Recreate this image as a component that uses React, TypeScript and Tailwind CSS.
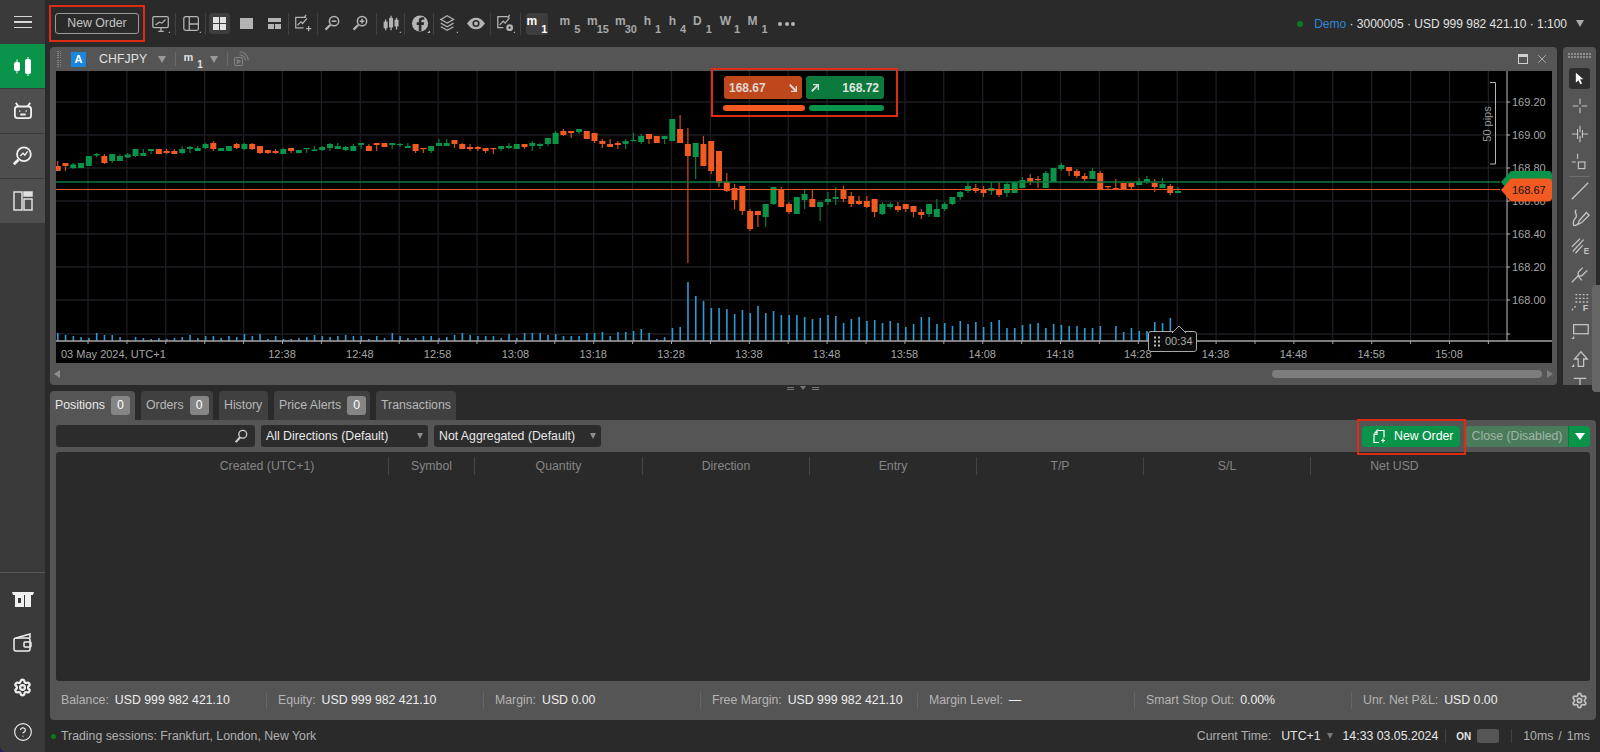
import React from 'react';
import { CircleHelp, Settings, X } from 'lucide-react';

// [green?, high, bodyTop, bodyBottom, low] in page pixels
const candles: number[][] = [
  [0,161,166,171,171],[0,163,163,166,171],[1,163,164.5,168,169],[1,163,163,168,168],[1,156,156,166,166],[1,153,154,155.5,157],
  [0,154,156,163,164],[1,154,154,161,163],[1,154,156,161,161],[1,153,154.5,157.5,158],[1,149,149,156,157],[1,149,153,156,156],
  [1,149,149,151,154],[0,149,149,154,154],[0,149,151,153,154],[0,149,151,154,154],[1,146,149,153,154],[1,146,147,149,153],
  [1,146,148,151,151],[1,143,144,148,149],[0,141,143,149,151],[1,148,148,151,151],[1,146,146,151,151],[0,143,144,148,149],
  [1,143,144,149,150],[0,143,144,149,150],[0,146,146,153,154],[0,150,150,153,154],[0,149,151,153,154],[1,148,149,154,154],
  [0,148,148,151,153],[1,150,150,153,153],[1,148,148,149,153],[1,146,149.5,151,151],[1,146,147,150,151],[1,143,144,148,151],
  [1,143,146,149,149],[1,146,147,150,151],[1,144,146,151,151],[1,143,143,145,149],[0,144,146,151,151],[0,143,143,145,151],
  [0,143,143,147,147],[1,143,143,145,149],[1,143,144,145,147],[1,143,146,148,148],
  [0,144,144,151,153],[0,148,148,149,153],[1,146,146,151,153],[1,139,143,146,146],[1,139,143,146,146],[0,140,140,144,148],
  [0,143,144,149,149],[0,144,147,149,151],[0,146,147,149,151],[0,148,148,151,153],[0,148,148,149,154],[1,146,146,149,151],
  [1,143,146,148,149],[1,144,144,149,149],[0,144,144,147,149],[1,141,143,146,151],[1,143,144,146,149],[1,138,138,144,146],
  [1,131,133,144,144],[0,129,131,135,136],[0,131,131,133,138],[1,129,129,132,134],[0,131,131,139,139],[0,133,133,141,143],
  [0,139,141,144,148],[0,139,144,147,147],[0,141,143,145,149],[1,139,141,144,149],[1,133,140,141,141],[1,134,136,142,144],
  [0,134,134,139,144],
  [0,136,136,143,143],[1,136,136,139,144],[1,119,119,141,141],[0,115,129,143,143],[0,128,144,156,263],[1,143,143,157,179],
  [0,136,144,166,166],[0,141,141,171,174],[0,151,151,183,187],[0,173,182,191,192],[0,184,188,200,209],[0,186,186,211,215],
  [0,209,211,229,231],[0,211,211,215,227],[1,204,204,217,227],[1,187,187,204,205],[0,187,189,207,207],[0,202,204,212,214],
  [1,197,197,214,214],[1,189,194,200,209],[0,189,199,207,207],[1,202,202,207,221],[1,192,199,202,205],[1,187,197,199,205],
  [0,186,189,199,202],[0,192,196,204,207],[0,196,201,204,205],[0,196,201,207,208],[0,199,199,212,217],[1,202,204,214,215],
  [1,202,204,207,209],[0,202,206,210,212],[0,204,204,209,212],[0,206,206,212,217],[0,209,212,215,219],[1,204,204,214,217],
  [1,199,209,217,217],[1,202,204,209,211],[1,197,197,204,205],[1,191,192,197,200],[1,182,186,191,193],[0,184,188,191,193],
  [0,186,189,193,197],[1,182,188,191,195],[0,182,189,195,197],[1,182,184,193,197],[1,182,182,193,193],[1,177,180,188,188],
  [0,174,178,182,185],[0,176,179,180,188],[1,171,173,188,188],[1,168,168,182,182],[1,163,165,169,171],[0,167,167,171,176],
  [0,169,171,176,178],[0,173,176,179,181],[1,168,171,179,179],[0,171,173,189,189],[0,186,186,187,189],[0,179,188,189,189],
  [0,183,183,189,189],[0,183,183,187,189],[1,178,181,185,185],[1,176,179,182,184],[0,179,183,187,192],[1,178,184,188,188],
  [0,184,186,193,195],[1,187,191,193,193],
];

const volumes = [
  8,6,5,4,3,8,6,6,4,1,4,3,2,3,2,3,4,6,3,5,5,3,5,4,7,5,7,2,5,2,2,3,4,6,5,4,5,6,5,5,2,5,3,8,5,3,3,5,5,3,4,6,8,6,5,5,5,3,7,3,8,8,8,6,7,5,5,5,8,8,9,5,9,9,10,
  12,8,2,4,13,14,59,45,40,33,33,32,27,31,28,35,28,30,26,26,26,24,22,23,26,25,18,22,24,20,21,18,20,18,14,17,24,24,17,18,15,20,17,19,
  14,19,21,13,13,16,17,18,13,17,16,15,15,13,13,15,0,15,9,13,10,10,19,18,23,0,
];

const prices = [['169.20', 102], ['169.00', 135], ['168.80', 168], ['168.60', 201], ['168.40', 234], ['168.20', 267], ['168.00', 300]] as const;
const times = ['12:38', '12:48', '12:58', '13:08', '13:18', '13:28', '13:38', '13:48', '13:58', '14:08', '14:18', '14:28', '14:38', '14:48', '14:58', '15:08'];
const gridX = Array.from({ length: 37 }, (_, i) => 88 + i * 38.9);
const GREEN = '#09944a';
const ORANGE = '#f25a22';

const Corner = () => <path d="M21 19v2h-2z" fill="currentColor" stroke="none" />;

const Ico = ({ children, className }: { children: React.ReactNode; className: string }) => (
  <svg viewBox="0 0 22 22" fill="none" stroke="currentColor" strokeWidth="1.4" className={className}>
    {children}
  </svg>
);

const Divider = ({ className }: { className: string }) => <div className={`w-px h-[22px] bg-[#424242] ${className}`} />;

const timeframes = [
  { a: 'm', b: '1', w: 'w-[22px] ml-[5px] bg-[#3d3d3d] text-white', sub: 'ml-[4px]' },
  { a: 'm', b: '5', w: 'w-[28px] ml-[8px] text-[#a8a8a8]', sub: 'ml-[4px]' },
  { a: 'm', b: '15', w: 'w-[28px] text-[#a8a8a8]', sub: 'ml-[-1px]' },
  { a: 'm', b: '30', w: 'w-[28px] text-[#a8a8a8]', sub: 'ml-[-1px]' },
  { a: 'h', b: '1', w: 'w-[25px] text-[#a8a8a8]', sub: 'ml-[4px]' },
  { a: 'h', b: '4', w: 'w-[25px] text-[#a8a8a8]', sub: 'ml-[4px]' },
  { a: 'D', b: '1', w: 'w-[25px] text-[#a8a8a8]', sub: 'ml-[4px]' },
  { a: 'W', b: '1', w: 'w-[30px] text-[#a8a8a8]', sub: 'ml-[3px]' },
  { a: 'M', b: '1', w: 'w-[25px] text-[#a8a8a8]', sub: 'ml-[4px]' },
];

const TopBar = () => (
  <div className="h-[47px] flex items-center pl-[4px] text-[#b4b4b4] bg-[#2a2a2a] shrink-0">
    <div className="w-[96px] h-[37px] border-2 border-[#de2c14] flex items-center justify-center shrink-0">
      <button className="w-[84px] h-[21px] rounded-[3px] border-[1.5px] border-[#9a9a9a] text-[#c4c4c4] flex items-center justify-center">New Order</button>
    </div>
    <Ico className="w-[20px] h-[20px] ml-[6px] shrink-0">
      <rect x="2" y="3" width="17" height="12" rx="1.5" /><path d="M5 12l4-3 3 1 4-4M8 19h6M11 15v4" /><Corner />
    </Ico>
    <Divider className="ml-[4px]" />
    <Ico className="w-[20px] h-[20px] ml-[6px] shrink-0">
      <rect x="2" y="3" width="16" height="15" rx="2" /><path d="M8 3v15M8 11h10" /><Corner />
    </Ico>
    <Divider className="ml-[3px]" />
    <div className="w-[21px] h-[21px] ml-[3px] rounded-[3px] bg-[#3d3d3d] grid grid-cols-2 gap-[1.5px] p-[4px] shrink-0">
      <i className="bg-[#e2e2e2]" /><i className="bg-[#e2e2e2]" /><i className="bg-[#e2e2e2]" /><i className="bg-[#e2e2e2]" />
    </div>
    <div className="w-[13px] h-[11px] ml-[10px] bg-[#b4b4b4] shrink-0" />
    <div className="w-[13px] h-[11px] ml-[15px] flex flex-col gap-[1.5px] shrink-0">
      <i className="h-[4px] bg-[#b4b4b4]" />
      <div className="flex-1 flex gap-[1.5px]"><i className="flex-1 bg-[#b4b4b4]" /><i className="flex-1 bg-[#b4b4b4]" /></div>
    </div>
    <Divider className="ml-[7px]" />
    <Ico className="w-[19px] h-[19px] ml-[5px] shrink-0">
      <path d="M14 4H2v12h9" /><path d="M4 13l4-4 2 2 5-6M14 1l-2 3" /><path d="M17 14v6M14 17h6" />
    </Ico>
    <Divider className="ml-[4px]" />
    <Ico className="w-[17px] h-[17px] ml-[6px] shrink-0">
      <circle cx="13" cy="8" r="6" strokeWidth="2" /><path d="M8 13l-6 6" strokeWidth="3" /><path d="M10 8h6" strokeWidth="2" />
    </Ico>
    <Ico className="w-[17px] h-[17px] ml-[11px] shrink-0">
      <circle cx="13" cy="8" r="6" strokeWidth="2" /><path d="M8 13l-6 6" strokeWidth="3" /><path d="M10 8h6M13 5v6" strokeWidth="2" />
    </Ico>
    <Divider className="ml-[7px]" />
    <Ico className="w-[20px] h-[20px] ml-[5px] shrink-0">
      <path d="M4 6v12M10 2v16M16 4v13" /><rect x="2.5" y="9" width="3" height="6" fill="currentColor" /><rect x="8.5" y="5" width="3" height="9" fill="currentColor" /><rect x="14.5" y="7" width="3" height="6" fill="currentColor" /><Corner />
    </Ico>
    <Divider className="ml-[2px]" />
    <svg viewBox="0 0 20 20" className="w-[19px] h-[19px] ml-[6px] shrink-0">
      <circle cx="9.5" cy="10" r="8.5" fill="#b4b4b4" />
      <path d="M11 18v-6.5h2.4l.4-2.7H11V7.3c0-.8.3-1.3 1.4-1.3h1.5V3.6c-.5-.1-1.3-.2-2.1-.2-2.3 0-3.6 1.3-3.6 3.6v1.8H6v2.7h2.2V18z" fill="#2a2a2a" />
      <path d="M20 17v3h-3z" fill="#b4b4b4" />
    </svg>
    <Divider className="ml-[3px]" />
    <Ico className="w-[20px] h-[20px] ml-[5px] shrink-0">
      <path d="M9 2l7 4-7 4-7-4zM2 10l7 4 7-4M2 14l7 4 7-4" /><Corner />
    </Ico>
    <svg viewBox="0 0 20 14" className="w-[18px] h-[13px] ml-[8px] shrink-0">
      <path d="M0 7c3-4.500 6-6.500 10-6.500S17 2.500 20 7c-3 4.500-6 6.500-10 6.500S3 11.500 0 7z" fill="#b4b4b4" />
      <circle cx="10" cy="7" r="4" fill="#2a2a2a" /><circle cx="10" cy="7" r="2.200" fill="#b4b4b4" />
    </svg>
    <Divider className="ml-[5px]" />
    <Ico className="w-[20px] h-[20px] ml-[5px] shrink-0">
      <path d="M13 3H2v12h6" /><path d="M4 12l4-4 2 2 5-6M15 1l-2 3" /><circle cx="15" cy="15" r="2.500" strokeWidth="2.500" /><Corner />
    </Ico>
    <Divider className="ml-[4px]" />
    {timeframes.map((t) => (
      <div key={t.a + t.b} className={`h-[22px] rounded-[3px] shrink-0 flex justify-center font-bold ${t.w}`}>
        <span className="text-[12px] leading-[14px] mt-[1px]">{t.a}</span>
        <span className={`text-[11px] leading-[12px] mt-[10px] ${t.sub}`}>{t.b}</span>
      </div>
    ))}
    <div className="flex gap-[2.5px] ml-[8px] shrink-0">
      <i className="w-[4px] h-[4px] rounded-full bg-[#b4b4b4]" /><i className="w-[4px] h-[4px] rounded-full bg-[#b4b4b4]" /><i className="w-[4px] h-[4px] rounded-full bg-[#b4b4b4]" />
    </div>
    <div className="ml-auto flex items-center pr-[16px] text-[12px] text-[#e2e2e2]">
      <i className="w-[6px] h-[6px] rounded-full bg-[#0a7a1e] mr-[11px]" />
      <span className="text-[#2f86d8]">Demo</span>
      <span>&nbsp;· 3000005 · USD 999 982 421.10 · 1:100</span>
      <span className="w-0 h-0 ml-[9px] border-x-[4px] border-x-transparent border-t-[7px] border-t-[#aaaaaa]" />
    </div>
  </div>
);

const ChartCanvas = () => (
  <svg viewBox="56 71 1496 292" className="w-[1496px] h-[292px] block">
    <rect x="56" y="71" width="1496" height="292" fill="#000" />
    {gridX.map((x) => <line key={x} x1={x} x2={x} y1="71" y2="341" stroke="#1e1e23" strokeWidth="1.300" />)}
    {[102, 135, 168, 201, 234, 267, 300, 334].map((y) => <line key={y} x1="56" x2="1507" y1={y} y2={y} stroke="#1e1e23" strokeWidth="1.300" />)}
    {volumes.map((h, i) => h > 0 && <rect key={i} x={57 + i * 7.78} y={341 - h} width="1.600" height={h} fill="#2c9bd0" />)}
    {candles.map(([g, hi, top, bot, lo], i) => {
      const x = 57.7 + i * 7.78;
      const c = g ? GREEN : ORANGE;
      return (
        <g key={i}>
          <line x1={x} x2={x} y1={hi} y2={lo} stroke={g ? '#0a7f3f' : '#cf4f20'} strokeWidth="1.200" />
          <rect x={x - 3} y={top} width="6" height={Math.max(bot - top, 1.2)} fill={c} />
        </g>
      );
    })}
    <line x1="56" x2="1500" y1="182" y2="182" stroke="#0d7a3c" strokeWidth="1.300" />
    <line x1="56" x2="1500" y1="189.500" y2="189.500" stroke="#e55a26" strokeWidth="1" />
    <line x1="56" x2="1552" y1="341" y2="341" stroke="#a6a6a6" strokeWidth="1.500" />
    <line x1="1507" x2="1507" y1="71" y2="341" stroke="#bdbdbd" strokeWidth="1" />
    {gridX.map((x) => <line key={x} x1={x} x2={x} y1="341" y2="344" stroke="#a6a6a6" strokeWidth="1" />)}
    {prices.map(([p, y]) => (
      <g key={p}>
        <line x1="1507" x2="1510" y1={y} y2={y} stroke="#bdbdbd" />
        <text x="1512" y={y + 4} fontSize="11" fill="#a6a6a6">{p}</text>
      </g>
    ))}
    <line x1="1507" x2="1510" y1="334" y2="334" stroke="#bdbdbd" />
    <path d="M1490 82.500h5.500v81.500h-5.500" fill="none" stroke="#b5b5b5" />
    <text x="0" y="0" fontSize="11" fill="#9a9a9a" textAnchor="middle" transform="translate(1491 124) rotate(-90)">50 pips</text>
    <path d="M1511 171h37q4 0 4 4v19h-41l-10-12z" fill={GREEN} />
    <path d="M1511 178.500h37q4 0 4 4v15q0 4-4 4h-37l-10-11.500z" fill="#f25a22" />
    <text x="1512" y="194" fontSize="11" fill="#111">168.67</text>
    <text x="61" y="358" fontSize="11" fill="#a6a6a6">03 May 2024, UTC+1</text>
    {times.map((t, i) => <text key={t} x={282 + i * 77.8} y="358" fontSize="11" fill="#a6a6a6" textAnchor="middle">{t}</text>)}
  </svg>
);

const ChartPanel = () => (
  <div className="w-[1507px] h-[338px] ml-[5px] rounded-[4px] bg-[#555555] flex flex-col shrink-0">
    <div className="h-[24px] flex items-center text-[#e0e0e0] shrink-0">
      <div className="w-[4px] h-[16px] ml-[7px] grid grid-cols-2 gap-[1px]">
        {Array.from({ length: 16 }).map((_, i) => <i key={i} className="bg-[#858585] h-[1px]" />)}
      </div>
      <div className="relative w-[15px] h-[15px] ml-[10px] bg-[#1a86e0] text-white text-[11px] font-bold flex items-center justify-center">A</div>
      <span className="ml-[13px] tracking-[0.1px]">CHFJPY</span>
      <span className="w-0 h-0 ml-[11px] border-x-[4px] border-x-transparent border-t-[7px] border-t-[#9a9a9a]" />
      <div className="w-px h-[14px] bg-[#6a6a6a] ml-[9px]" />
      <div className="ml-[7px] flex items-start h-[24px] font-bold">
        <span className="text-[11px] leading-[12px] mt-[4px]">m</span>
        <span className="text-[10px] leading-[12px] mt-[12px] ml-[4px]">1</span>
      </div>
      <span className="w-0 h-0 ml-[7px] border-x-[4px] border-x-transparent border-t-[7px] border-t-[#9a9a9a]" />
      <div className="w-px h-[14px] bg-[#6a6a6a] ml-[9px]" />
      <Ico className="w-[16px] h-[16px] ml-[5px] text-[#858585]">
        <rect x="2" y="9" width="11" height="11" rx="2" /><path d="M6 12v5l4-2.500zM9 5a8 8 0 0 1 8 8M9 1a12 12 0 0 1 12 12" />
      </Ico>
      <div className="ml-auto flex items-center pr-[8px] text-[#cfcfcf]">
        <div className="w-[10px] h-[10px] border border-[#cfcfcf] border-t-[3px]" />
        <X size={14} strokeWidth={1.200} className="ml-[7px]" />
      </div>
    </div>
    <div className="relative mx-[6px] h-[292px] shrink-0">
      <ChartCanvas />
      <div className="absolute left-[655px] top-[-3px] w-[187px] h-[49px] border-2 border-[#de2c14]">
        <div className="flex gap-[4px] ml-[11px] mt-[6px]">
          <div className="w-[78px] h-[23px] rounded-[3px] bg-[#bf471c] text-[#e0d6d0] font-bold text-[12px] flex items-center justify-between px-[5px]">
            168.67
            <svg viewBox="0 0 10 10" className="w-[8px] h-[8px]"><path d="M1 1l7 7M9.500 2.500v7h-7" fill="none" stroke="#ddd" strokeWidth="2.400" /></svg>
          </div>
          <div className="w-[78px] h-[23px] rounded-[3px] bg-[#0b7a3c] text-[#e0e6e0] font-bold text-[12px] flex items-center justify-between px-[5px]">
            <svg viewBox="0 0 10 10" className="w-[8px] h-[8px]"><path d="M1 9l7-7M2.500.5h7v7" fill="none" stroke="#ddd" strokeWidth="2.400" /></svg>
            168.72
          </div>
        </div>
        <div className="flex gap-[4px] ml-[10px] mt-[6px]">
          <i className="w-[82px] h-[6px] rounded-full bg-[#f25a22]" />
          <i className="w-[75px] h-[6px] rounded-full bg-[#09944a]" />
        </div>
      </div>
      <div className="absolute left-[1092px] top-[260px] w-[49px] h-[21px] rounded-[3px] border border-[#a8a8a8] bg-[#0b0b0b] flex items-center text-[11px] text-[#a8a8a8] pl-[3px]">
        <svg viewBox="0 0 10 12" className="w-[10px] h-[13px] mr-[3px]">
          <path d="M2 1h2v2H2zM6 1h2v2H6zM2 5h2v2H2zM6 5h2v2H6zM2 9h2v2H2zM6 9h2v2H6z" fill="#bbb" />
        </svg>
        00:34
        <svg viewBox="0 0 14 8" className="absolute left-[23px] top-[-7px] w-[14px] h-[8px]">
          <path d="M0 8L7 1l7 7" fill="#0b0b0b" stroke="#a8a8a8" />
        </svg>
      </div>
    </div>
    <div className="flex-1 flex items-center px-[4px] gap-[3px]">
      <span className="w-0 h-0 border-y-[4px] border-y-transparent border-r-[6px] border-r-[#8c8c8c]" />
      <div className="ml-auto w-[270px] h-[8px] rounded-full bg-[#7d7d7d]" />
      <span className="w-0 h-0 ml-[2px] border-y-[4px] border-y-transparent border-l-[6px] border-l-[#7d7d7d]" />
    </div>
  </div>
);

const RightTools = () => (
  <div className="relative w-[33px] h-[338px] ml-[6px] rounded-t-[4px] bg-[#555555] shrink-0 text-[#c4c4c4] flex flex-col items-center overflow-hidden">
    <div className="w-[23px] h-[5px] mt-[6px] grid grid-cols-8 gap-[1px] shrink-0">
      {Array.from({ length: 16 }).map((_, i) => <i key={i} className="bg-[#8c8c8c]" />)}
    </div>
    <div className="w-[21px] h-[21px] mt-[10px] rounded-[3px] bg-[#2e2e2e] flex items-center justify-center shrink-0">
      <svg viewBox="0 0 12 14" className="w-[10px] h-[13px]"><path d="M1 0l9 8H6l2.500 5-2 1L4 9l-3 3z" fill="#fff" /></svg>
    </div>
    <Ico className="w-[18px] h-[18px] mt-[8px] shrink-0"><path d="M11 2v7M11 13v7M2 11h7M13 11h7" /></Ico>
    <Ico className="w-[18px] h-[18px] mt-[10px] shrink-0"><path d="M11 1v8M11 13v8M1 11h8M13 11h8M8 5v12M14 6v10" /></Ico>
    <Ico className="w-[18px] h-[18px] mt-[10px] shrink-0"><path d="M8 1v6M1 11h5" /><rect x="9" y="11" width="8" height="8" /></Ico>
    <div className="w-[21px] h-px bg-[#6f6f6f] mt-[5px] shrink-0" />
    <Ico className="w-[20px] h-[20px] mt-[4px] shrink-0"><path d="M2 20L20 2" /></Ico>
    <Ico className="w-[20px] h-[20px] mt-[7px] shrink-0"><path d="M7 2c-4 3 3 6-1 9-2 2-3 4-2 8 2 1 3 0 5-2" /><path d="M10 14l8-9 3 3-8 8-4 2z" /></Ico>
    <Ico className="w-[20px] h-[20px] mt-[8px] shrink-0">
      <path d="M2 12l9-9M3 17L15 4M6 19L14 10" />
      <text x="15" y="20" fontSize="9" fill="currentColor" stroke="none" fontWeight="bold">E</text>
    </Ico>
    <Ico className="w-[20px] h-[20px] mt-[8px] shrink-0"><path d="M2 20l7-7M9 13V9l5-5M9 13h4l6-6M13 18l-4-5" /></Ico>
    <Ico className="w-[20px] h-[20px] mt-[8px] shrink-0">
      <path d="M6 3h15M6 7h15M6 11h15" strokeDasharray="2 2" /><path d="M2 20l5-5" strokeDasharray="2 2" />
      <text x="14" y="21" fontSize="10" fill="currentColor" stroke="none" fontWeight="bold">F</text>
    </Ico>
    <Ico className="w-[20px] h-[20px] mt-[9px] shrink-0"><rect x="4" y="4" width="16" height="10" /><path d="M2 19h2v-2" /></Ico>
    <Ico className="w-[20px] h-[20px] mt-[8px] shrink-0"><path d="M12 3l7 8h-4v8H9v-8H5z" /><path d="M2 19h2v-2" /></Ico>
    <Ico className="w-[20px] h-[20px] mt-[4px] shrink-0"><path d="M4 6h14M11 6v14" /></Ico>
  </div>
);

const Tab = ({ label, count, active, className }: { label: string; count?: number; active?: boolean; className: string }) => (
  <div className={`h-[29px] rounded-t-[4px] flex items-center pl-[5px] shrink-0 ${active ? 'bg-[#555555] text-[#e8e8e8]' : 'bg-[#404040] text-[#b8b8b8]'} ${className}`}>
    {label}
    {count !== undefined && (
      <span className="w-[19px] h-[19px] ml-[6px] rounded-[3px] bg-[#858585] text-white flex items-center justify-center">{count}</span>
    )}
  </div>
);

const columns = [
  { label: 'Created (UTC+1)', w: 'w-[333px] pl-[90px]' },
  { label: 'Symbol', w: 'w-[86px]' },
  { label: 'Quantity', w: 'w-[168px]' },
  { label: 'Direction', w: 'w-[167px]' },
  { label: 'Entry', w: 'w-[167px]' },
  { label: 'T/P', w: 'w-[167px]' },
  { label: 'S/L', w: 'w-[167px]' },
  { label: 'Net USD', w: 'w-[167px] border-r-0' },
];

const stats = [
  { k: 'Balance:', v: 'USD 999 982 421.10' },
  { k: 'Equity:', v: 'USD 999 982 421.10' },
  { k: 'Margin:', v: 'USD 0.00' },
  { k: 'Free Margin:', v: 'USD 999 982 421.10' },
  { k: 'Margin Level:', v: '—' },
  { k: 'Smart Stop Out:', v: '0.00%' },
  { k: 'Unr. Net P&L:', v: 'USD 0.00' },
];

const BottomPanel = () => (
  <div className="ml-[5px] mr-[4px] h-[300px] rounded-b-[4px] rounded-tr-[4px] bg-[#555555] flex flex-col shrink-0">
    <div className="h-[32px] flex items-start pt-[5px] px-[6px] shrink-0">
      <div className="relative w-[199px] h-[22px] rounded-[3px] bg-[#2c2c2c] shrink-0">
        <svg viewBox="0 0 16 16" className="absolute right-[7px] top-[4px] w-[14px] h-[14px]" fill="none" stroke="#d0d0d0">
          <circle cx="10" cy="6" r="4.500" strokeWidth="1.500" /><path d="M7 9.500L2 15" strokeWidth="2.500" />
        </svg>
      </div>
      <div className="w-[167px] h-[22px] ml-[6px] rounded-[3px] bg-[#2c2c2c] text-[#e8e8e8] flex items-center justify-between px-[5px] shrink-0">
        All Directions (Default)
        <span className="w-0 h-0 border-x-[3.500px] border-x-transparent border-t-[6px] border-t-[#8c8c8c]" />
      </div>
      <div className="w-[167px] h-[22px] ml-[6px] rounded-[3px] bg-[#2c2c2c] text-[#e8e8e8] flex items-center justify-between px-[5px] shrink-0">
        Not Aggregated (Default)
        <span className="w-0 h-0 border-x-[3.500px] border-x-transparent border-t-[6px] border-t-[#8c8c8c]" />
      </div>
      <div className="relative ml-auto w-[98px] h-[21px] mt-[1px] rounded-[4px] bg-[#09944a] text-white flex items-center pl-[10px] shrink-0">
        <svg viewBox="0 0 14 14" className="w-[14px] h-[15px] mr-[8px]" fill="none" stroke="#fff" strokeWidth="1.200">
          <path d="M6 1h6v7M7 13H2V5l3-4v4H2M11 9v4M9 11h4" />
        </svg>
        New Order
        <div className="absolute left-[-5px] right-[-6px] top-[-7px] bottom-[-8px] border-2 border-[#de2c14]" />
      </div>
      <div className="w-[102px] h-[21px] mt-[1px] ml-[6px] rounded-l-[3px] bg-[#4a7c5c] text-[#a2b5a8] flex items-center justify-center shrink-0">Close (Disabled)</div>
      <div className="w-[22px] h-[21px] mt-[1px] rounded-r-[4px] bg-[#09944a] border-l border-[#0a7a3e] flex items-center justify-center shrink-0">
        <span className="w-0 h-0 border-x-[5px] border-x-transparent border-t-[7px] border-t-white" />
      </div>
    </div>
    <div className="mx-[6px] h-[229px] rounded-[3px] bg-[#2a2a2a] shrink-0">
      <div className="flex pt-[5px] text-[#858585]">
        {columns.map((c) => (
          <div key={c.label} className={`h-[18px] border-r border-[#454545] flex items-center justify-center shrink-0 ${c.w}`}>{c.label}</div>
        ))}
      </div>
    </div>
    <div className="flex-1 flex items-center relative text-[#b4b4b4]">
      {stats.map((s, i) => (
        <div key={s.k} className={`w-[217px] h-[17px] flex items-center pl-[11px] shrink-0 ${i < 6 ? 'border-r border-[#666666]' : ''}`}>
          {s.k}
          <span className="ml-[6px] text-[#efefef]">{s.v}</span>
        </div>
      ))}
      <Settings size={17} strokeWidth={2.400} className="absolute right-[8px] top-[11px] text-[#c4c4c4]" />
    </div>
  </div>
);

const SideItem = ({ children, className }: { children: React.ReactNode; className: string }) => (
  <div className={`w-[45px] h-[44px] flex items-center justify-center shrink-0 ${className}`}>{children}</div>
);

const Sidebar = () => (
  <div className="w-[45px] h-full bg-[#3a3a3a] flex flex-col text-[#eeeeee] shrink-0">
    <SideItem className="text-[#d8d8d8]">
      <div className="w-[18px] flex flex-col gap-[4px]"><i className="h-[1.500px] bg-[#d8d8d8]" /><i className="h-[1.500px] bg-[#d8d8d8]" /><i className="h-[1.500px] bg-[#d8d8d8]" /></div>
    </SideItem>
    <SideItem className="bg-[#09944a]">
      <svg viewBox="0 0 17 19" className="w-[17px] h-[19px]" fill="#fff" stroke="#fff" strokeWidth="1">
        <path d="M3 2.500v14M14 0v19" /><rect x="0.500" y="5.500" width="5" height="8" rx="1" /><rect x="11.500" y="2.500" width="5" height="14" rx="1" />
      </svg>
    </SideItem>
    <SideItem className="bg-[#4e4e4e] mt-px">
      <svg viewBox="0 0 22 20" className="w-[20px] h-[18px]" fill="none" stroke="#f0f0f0" strokeWidth="2">
        <path d="M3 1l3 4M19 1l-3 4" /><rect x="2" y="5" width="18" height="13" rx="3" /><path d="M7 10h1M14 10h1M8 14h6" strokeWidth="2.200" />
      </svg>
    </SideItem>
    <SideItem className="bg-[#4e4e4e] mt-px">
      <svg viewBox="0 0 24 24" className="w-[22px] h-[22px]" fill="none" stroke="#f0f0f0" strokeWidth="2">
        <circle cx="13" cy="10" r="7.500" /><path d="M7 16l-5 5" strokeWidth="3" /><path d="M9 12l3-3 2 2 3-4" strokeWidth="1.500" />
      </svg>
    </SideItem>
    <SideItem className="bg-[#4e4e4e] mt-px">
      <svg viewBox="0 0 22 22" className="w-[22px] h-[22px]" fill="none" stroke="#e0e0e0" strokeWidth="1.500">
        <rect x="2" y="2" width="8" height="18" /><rect x="12" y="2" width="8" height="4" fill="#e0e0e0" /><rect x="12" y="9" width="8" height="11" />
      </svg>
    </SideItem>
    <div className="w-full h-px bg-[#555555] mt-auto mb-[12px]" />
    <SideItem className="!h-[30px] mb-[12px]">
      <svg viewBox="0 0 22 16" className="w-[22px] h-[16px]" fill="#f0f0f0">
        <path d="M0 0h22l-1 3h-2v12h-6V3h-1v12H3V3H1zM6 6v5h3V6z" fillRule="evenodd" />
      </svg>
    </SideItem>
    <SideItem className="!h-[30px] mb-[15px]">
      <svg viewBox="0 0 20 20" className="w-[20px] h-[20px]" fill="none" stroke="#f0f0f0" strokeWidth="1.500">
        <rect x="1" y="6" width="16" height="13" rx="2" /><rect x="11" y="10" width="7" height="5" rx="1" /><path d="M3 6l14-4v4" />
      </svg>
    </SideItem>
    <SideItem className="!h-[30px] mb-[15px]">
      <Settings size={19} strokeWidth={2.800} />
    </SideItem>
    <SideItem className="!h-[30px] mb-[5px]">
      <CircleHelp size={20} strokeWidth={1.400} />
    </SideItem>
  </div>
);

const StatusBar = () => (
  <div className="flex-1 flex items-center pl-[6px] pr-[10px] text-[#b0b0b0]">
    <i className="w-[5px] h-[5px] rounded-full bg-[#0a7a1e] mr-[5px]" />
    Trading sessions: Frankfurt, London, New York
    <span className="ml-auto">Current Time:</span>
    <span className="ml-[10px] text-[#e2e2e2]">UTC+1</span>
    <span className="w-0 h-0 ml-[6px] border-x-[3.500px] border-x-transparent border-t-[6px] border-t-[#777777]" />
    <span className="ml-[10px] text-[#e8e8e8]">14:33 03.05.2024</span>
    <div className="w-px h-[14px] bg-[#444444] mx-[7px]" />
    <span className="ml-[3px] text-[10px] font-bold text-[#e2e2e2]">ON</span>
    <div className="w-[22px] h-[14px] ml-[6px] rounded-[3px] bg-[#555555]" />
    <div className="w-px h-[14px] bg-[#444444] ml-[12px]" />
    <span className="ml-[11px]">10ms</span>
    <span className="ml-[5px]">/</span>
    <span className="ml-[5px]">1ms</span>
  </div>
);

export default function App() {
  return (
    <div className="w-[1600px] h-[752px] bg-[#2a1a66] font-['Liberation_Sans',Arial,sans-serif] text-[12.3px] overflow-hidden">
      <div className="w-full h-full flex bg-[#2a2a2a] rounded-bl-[6px] overflow-hidden">
        <Sidebar />
        <div className="relative flex-1 min-w-0 flex flex-col">
          <TopBar />
          <div className="flex shrink-0">
            <ChartPanel />
            <RightTools />
          </div>
          <div className="h-[6px] flex items-center justify-center gap-[6px] text-[#777777] shrink-0 pr-[40px]">
            <i className="w-[7px] h-[3px] border-y border-[#777777]" />
            <span className="w-0 h-0 border-x-[3px] border-x-transparent border-t-[4px] border-t-[#777777]" />
            <i className="w-[7px] h-[3px] border-y border-[#777777]" />
          </div>
          <div className="flex ml-[5px] gap-[6px] shrink-0">
            <Tab label="Positions" count={0} active className="w-[85px]" />
            <Tab label="Orders" count={0} className="w-[72px]" />
            <Tab label="History" className="w-[49px]" />
            <Tab label="Price Alerts" count={0} className="w-[96px]" />
            <Tab label="Transactions" className="w-[80px]" />
          </div>
          <BottomPanel />
          <StatusBar />
          <div className="absolute right-0 top-[285px] w-[8px] h-[107px] rounded-l-[4px] bg-[#666666]" />
        </div>
      </div>
    </div>
  );
}
